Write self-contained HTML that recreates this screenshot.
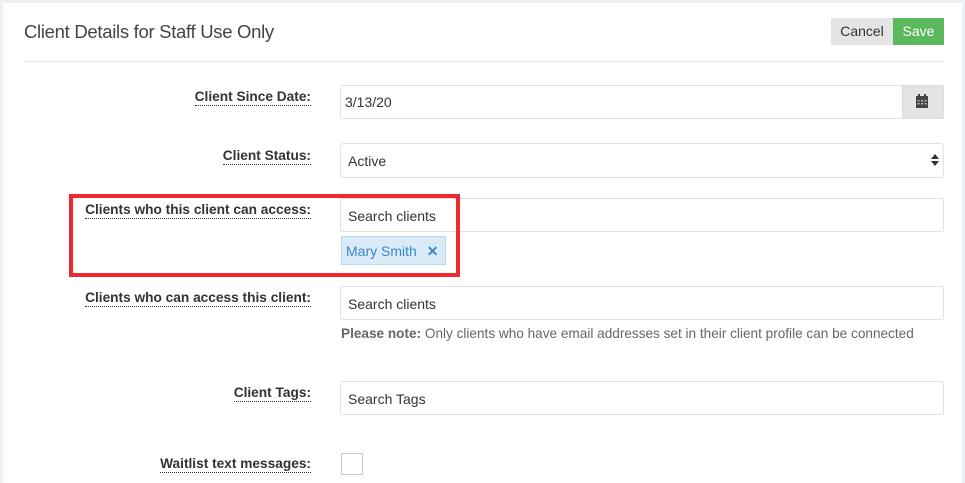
<!DOCTYPE html>
<html><head><style>
*{box-sizing:border-box;margin:0;padding:0}
body{width:965px;height:480px;background:#eef1f4;font-family:"Liberation Sans",sans-serif;overflow:hidden;position:relative}
.panel{position:absolute;left:3px;top:3px;width:959px;height:480px;background:#fff}
.a{position:absolute}
h1{position:absolute;left:24px;top:21px;font-size:18.5px;font-weight:normal;color:#444;letter-spacing:-0.3px}
.btn{position:absolute;top:18px;height:27px;font-size:14px;line-height:27px;text-align:center}
.lbl{position:absolute;right:654px;font-size:13.7px;font-weight:bold;color:#333;border-bottom:1px dotted #333;line-height:17px;white-space:nowrap}
.inp{position:absolute;left:340px;width:604px;border:1px solid #e2e2e2;font-size:14px;color:#333;padding-left:7px;border-radius:2px}
</style></head><body>
<div class="panel"></div>
<h1>Client Details for Staff Use Only</h1>
<div class="btn" style="left:831px;width:62px;background:#e4e4e4;color:#333">Cancel</div>
<div class="btn" style="left:893px;width:51px;background:#5cb85c;color:#fff">Save</div>
<div class="a" style="left:24px;top:61px;width:920px;height:1px;background:#e8e8e8"></div>

<div class="lbl" style="top:88px">Client Since Date:</div>
<div class="inp" style="top:85px;height:34px;line-height:32px;padding-left:4px">3/13/20</div>
<div class="a" style="left:902px;top:85px;width:42px;height:34px;background:#e4e4e4;border:1px solid #ddd"></div>
<svg class="a" style="left:915px;top:93px" width="14" height="16" viewBox="0 0 14 16"><rect x="1" y="3" width="12" height="12" fill="#444"/><rect x="3" y="1" width="2" height="3" fill="#444"/><rect x="9" y="1" width="2" height="3" fill="#444"/><g fill="#bbb"><rect x="2.5" y="7" width="2" height="1.5"/><rect x="6" y="7" width="2" height="1.5"/><rect x="9.5" y="7" width="2" height="1.5"/><rect x="2.5" y="10" width="2" height="1.5"/><rect x="6" y="10" width="2" height="1.5"/><rect x="9.5" y="10" width="2" height="1.5"/></g></svg>

<div class="lbl" style="top:147px">Client Status:</div>
<div class="inp" style="top:143px;height:35px;line-height:34px;border-radius:4px">Active</div>
<svg class="a" style="left:931px;top:154px" width="8" height="12" viewBox="0 0 8 12"><path d="M4 0L8 5H0Z M4 12L8 7H0Z" fill="#333"/></svg>

<div class="lbl" style="top:201px">Clients who this client can access:</div>
<div class="inp" style="top:198px;height:34px;line-height:34px">Search clients</div>
<div class="a" style="left:341px;top:236px;width:105px;height:29px;background:#d8ebf6;border:1px solid #b9d9ee;color:#3a87c8;font-size:14px;line-height:28px;padding-left:4px">Mary Smith <span style="font-weight:bold;margin-left:6px">✕</span></div>
<div class="a" style="left:69px;top:194px;width:391px;height:83px;border:4px solid #ee2a2e"></div>

<div class="lbl" style="top:289px">Clients who can access this client:</div>
<div class="inp" style="top:286px;height:34px;line-height:34px">Search clients</div>
<div class="a" style="left:341px;top:326px;font-size:13.6px;color:#666"><b>Please note:</b> Only clients who have email addresses set in their client profile can be connected</div>

<div class="lbl" style="top:384px">Client Tags:</div>
<div class="inp" style="top:381px;height:34px;line-height:34px">Search Tags</div>

<div class="lbl" style="top:455px">Waitlist text messages:</div>
<div class="a" style="left:341px;top:453px;width:22px;height:22px;border:1px solid #ccc;border-radius:2px"></div>
</body></html>
